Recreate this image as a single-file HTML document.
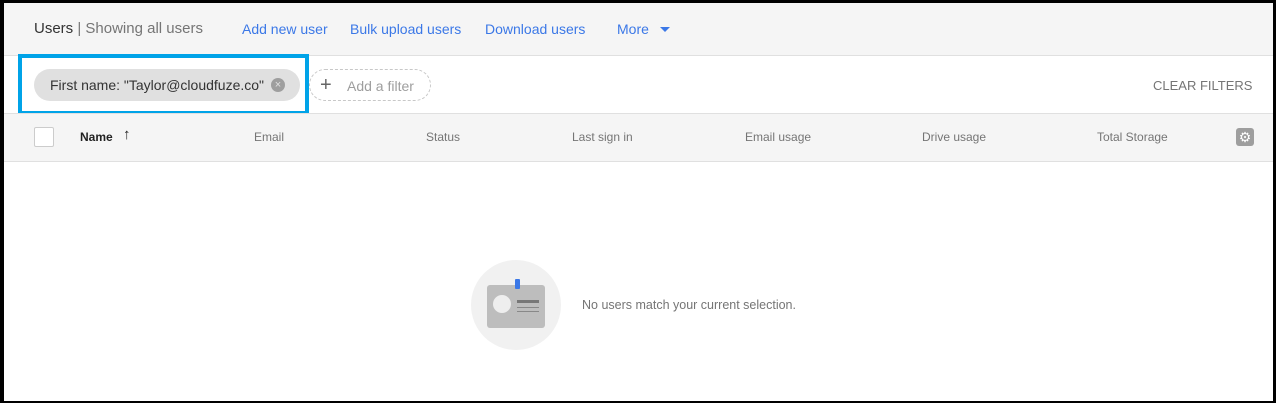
<!DOCTYPE html>
<html><head><style>
*{margin:0;padding:0;box-sizing:border-box}
body{width:1276px;height:403px;background:#000;font-family:"Liberation Sans",sans-serif;position:relative;overflow:hidden}
.in{position:absolute;left:4px;top:3px;width:1269px;height:398px;background:#fff}
.a{position:absolute;white-space:nowrap}
.hdr{position:absolute;left:0;top:0;width:100%;height:53px;background:#f5f5f5;border-bottom:1px solid #e0e0e0}
.th{position:absolute;left:0;top:110px;width:100%;height:49px;background:#f5f5f5;border-top:1px solid #e0e0e0;border-bottom:1px solid #e0e0e0}
.lk{color:#3b78e7;font-size:14px;top:18px}
.col{font-size:12px;color:#757575;top:127px}
</style></head><body>
<div class="in">
<div class="hdr"></div>
<div class="a" style="left:30px;top:17px;font-size:15px;color:#757575"><span style="color:#333">Users</span> | Showing all users</div>
<div class="a lk" style="left:238px">Add new user</div>
<div class="a lk" style="left:346px">Bulk upload users</div>
<div class="a lk" style="left:481px">Download users</div>
<div class="a lk" style="left:613px">More</div>
<div class="a" style="left:656px;top:24px;width:0;height:0;border-left:5px solid transparent;border-right:5px solid transparent;border-top:5px solid #3b78e7"></div>

<div class="a" style="left:30px;top:66px;width:266px;height:32px;border-radius:16px;background:#e0e0e0;font-size:14px;color:#333;padding:8px 0 0 16px">First name: "Taylor@cloudfuze.co"</div>
<div class="a" style="left:267px;top:75px;width:14px;height:14px;border-radius:50%;background:#9e9e9e;color:#e0e0e0;font-size:11px;line-height:14px;text-align:center">×</div>
<div class="a" style="left:305px;top:66px;width:122px;height:32px;border-radius:16px;border:1px dashed #c8c8c8;font-size:14px;color:#9e9e9e;padding:8px 0 0 37px">Add a filter</div>
<div class="a" style="left:316px;top:74px;font-size:20px;line-height:16px;color:#666">+</div>
<div class="a" style="left:1149px;top:75px;font-size:13px;color:#757575">CLEAR FILTERS</div>
<div class="a" style="left:14px;top:51px;width:291px;height:61px;border:4px solid #00a3e8"></div>

<div class="th"></div>
<div class="a" style="left:30px;top:124px;width:20px;height:20px;border:1px solid #ccc;border-radius:2px;background:#fff"></div>
<div class="a" style="left:76px;top:127px;font-size:12px;color:#222;font-weight:bold">Name</div>
<div class="a" style="left:119px;top:123px;font-size:15px;color:#222;font-weight:bold">↑</div>
<div class="a col" style="left:250px">Email</div>
<div class="a col" style="left:422px">Status</div>
<div class="a col" style="left:568px">Last sign in</div>
<div class="a col" style="left:741px">Email usage</div>
<div class="a col" style="left:918px">Drive usage</div>
<div class="a col" style="left:1093px">Total Storage</div>
<div class="a" style="left:1232px;top:125px;width:18px;height:18px;background:#9e9e9e;border-radius:3px;color:#fff;font-size:14px;line-height:18px;text-align:center">⚙</div>

<div class="a" style="left:467px;top:257px;width:90px;height:90px;border-radius:50%;background:#f1f1f1"></div>
<div class="a" style="left:483px;top:282px;width:58px;height:43px;border-radius:3px;background:#bdbdbd"></div>
<div class="a" style="left:511px;top:276px;width:5px;height:10px;background:#3b78e7;border-radius:1px"></div>
<div class="a" style="left:489px;top:292px;width:18px;height:18px;border-radius:50%;background:#eee"></div>
<div class="a" style="left:513px;top:297px;width:22px;height:3px;background:#777"></div>
<div class="a" style="left:513px;top:304px;width:22px;height:1px;background:#888"></div>
<div class="a" style="left:513px;top:308px;width:22px;height:1px;background:#888"></div>
<div class="a" style="left:578px;top:295px;font-size:12.5px;color:#757575">No users match your current selection.</div>
</div>
</body></html>
